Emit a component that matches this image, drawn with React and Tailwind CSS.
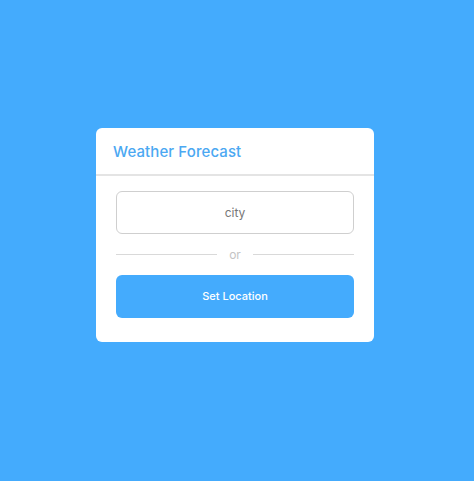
import React, { useState } from "react";

export default function App() {
  const [city, setCity] = useState("");

  return (
    <div
      className="min-h-screen w-full bg-[#44abfd] flex items-center justify-center"
      style={{ fontFamily: "Inter, 'Open Sans', sans-serif" }}
    >
      <div className="w-[278px] bg-white rounded-[6px] mt-[-11px] ml-[-4px]">
        {/* header */}
        <div className="h-[48px] flex items-center px-[17px] pt-[3px] border-b-2 border-[#e4e4e4]">
          <h1 className="text-[15px] font-medium text-[#4ba8f2] tracking-[0.1px]">Weather Forecast</h1>
        </div>

        <div className="px-5 pt-[15px] pb-[24px]">
          <input
            value={city}
            onChange={e => setCity(e.target.value)}
            placeholder="city"
            className="w-full h-[43px] rounded-[6px] border border-[#cfcfcf] text-center text-[12px] text-[#666] placeholder:text-[#777] outline-none"
          />

          <div className="flex items-center gap-3 h-[41px]">
            <div className="flex-1 h-px bg-[#d9d9d9]" />
            <span className="text-[12px] text-[#c4c4c4]">or</span>
            <div className="flex-1 h-px bg-[#d9d9d9]" />
          </div>

          <button className="w-full h-[43px] rounded-[6px] bg-[#44abfd] text-white text-[11px] font-medium">
            Set Location
          </button>
        </div>
      </div>
    </div>
  );
}
